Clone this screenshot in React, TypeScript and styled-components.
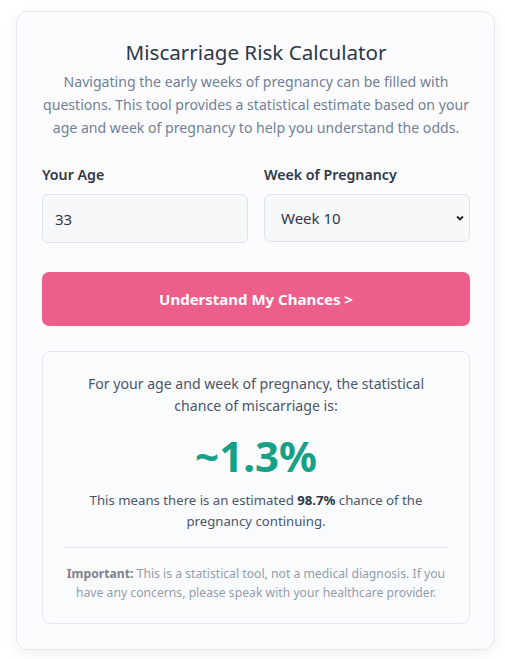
import React, { useState } from 'react'
import styled, { createGlobalStyle } from 'styled-components'

const GlobalStyle = createGlobalStyle`
  * {
    box-sizing: border-box;
  }

  body {
    margin: 0;
    background: #ffffff;
    font-family: 'Segoe UI', 'Noto Sans', sans-serif;
    color: #2d3748;
  }
`

const Page = styled.div`
  padding: 11px 10px 10px 16px;
`

const Card = styled.main`
  background: #fcfcfe;
  border: 1px solid #e6e8ee;
  border-radius: 12px;
  box-shadow: 0 4px 16px rgba(0, 0, 0, 0.06);
  padding: 26px 24px 25px 25px;
`

const Title = styled.h1`
  margin: 0 0 4px;
  text-align: center;
  font-size: 20.6px;
  line-height: 28px;
  font-weight: 400;
  color: #2d3748;
`

const Intro = styled.p`
  margin: 0 0 26px;
  text-align: center;
  font-size: 14.1px;
  line-height: 23px;
  color: #718096;
`

const FieldRow = styled.div`
  display: grid;
  grid-template-columns: 1fr 1fr;
  gap: 16px;
  margin-bottom: 29px;
`

const Field = styled.label`
  display: flex;
  flex-direction: column;
  gap: 9px;
`

const FieldLabel = styled.span`
  font-size: 14.2px;
  line-height: 20px;
  font-weight: 600;
  color: #2d3748;
`

const controlStyles = `
  height: 49px;
  padding: 0 16px;
  border: 1px solid #dfe3e8;
  border-radius: 6px;
  background: #f7f8fa;
  font-family: inherit;
  font-size: 15px;
  color: #2d3748;
  outline: none;
`

const NumberInput = styled.input`
  ${controlStyles}
  width: 100%;
  padding-left: 12px;
`

const Select = styled.select`
  ${controlStyles}
  width: 100%;
  height: 48px;
  appearance: none;
  background-image: url('data:image/svg+xml,<svg xmlns="http://www.w3.org/2000/svg" viewBox="0 0 12 12"><path d="M2.5 4.2 6 7.7l3.5-3.5" fill="none" stroke="%23222" stroke-width="2.2"/></svg>');
  background-repeat: no-repeat;
  background-position: right 4px center;
  background-size: 10px;
`

const CalcButton = styled.button`
  display: block;
  width: 100%;
  height: 54px;
  border: none;
  border-radius: 7px;
  background: #eb5f8a;
  color: #ffffff;
  font-family: inherit;
  font-size: 15px;
  font-weight: 700;
  cursor: pointer;
`

const ResultBox = styled.section`
  margin-top: 25px;
  padding: 21px 20px 21px;
  border: 1px solid #e6e8ee;
  border-radius: 8px;
  background: #fafbfd;
  text-align: center;
`

const ResultLead = styled.p`
  margin: 0;
  font-size: 14.1px;
  line-height: 22px;
  color: #4a5568;
`

const Percent = styled.div`
  margin: 13px 0 8px;
  font-size: 42px;
  font-weight: 700;
  line-height: 52px;
  color: #16a085;
`

const Continuing = styled.p`
  margin: 0 0 15px;
  font-size: 13.2px;
  line-height: 21px;
  color: #4a5568;

  strong {
    font-weight: 700;
    color: #2d3748;
  }
`

const Divider = styled.hr`
  margin: 0 0 16px;
  border: none;
  border-top: 1px solid #e3e7ec;
`

const Disclaimer = styled.p`
  margin: 0;
  font-size: 12.2px;
  line-height: 19px;
  color: #939cab;

  strong {
    font-weight: 700;
    color: #7a828e;
  }
`

const weeks = Array.from({ length: 20 }, (_, i) => i + 4)

export default function App() {
  const [age, setAge] = useState('33')
  const [week, setWeek] = useState('10')

  return (
    <Page>
      <GlobalStyle />
      <Card>
        <Title>Miscarriage Risk Calculator</Title>
        <Intro>
          Navigating the early weeks of pregnancy can be filled with questions. This tool provides a
          statistical estimate based on your age and week of pregnancy to help you understand the odds.
        </Intro>

        <FieldRow>
          <Field>
            <FieldLabel>Your Age</FieldLabel>
            <NumberInput type="number" value={age} onChange={e => setAge(e.target.value)} />
          </Field>
          <Field>
            <FieldLabel>Week of Pregnancy</FieldLabel>
            <Select value={week} onChange={e => setWeek(e.target.value)}>
              {weeks.map(w => (
                <option key={w} value={w}>
                  Week {w}
                </option>
              ))}
            </Select>
          </Field>
        </FieldRow>

        <CalcButton type="button">Understand My Chances &gt;</CalcButton>

        <ResultBox>
          <ResultLead>
            For your age and week of pregnancy, the statistical
            <br />
            chance of miscarriage is:
          </ResultLead>
          <Percent>~1.3%</Percent>
          <Continuing>
            This means there is an estimated <strong>98.7%</strong> chance of the pregnancy continuing.
          </Continuing>
          <Divider />
          <Disclaimer>
            <strong>Important:</strong> This is a statistical tool, not a medical diagnosis. If you have
            any concerns, please speak with your healthcare provider.
          </Disclaimer>
        </ResultBox>
      </Card>
    </Page>
  )
}
